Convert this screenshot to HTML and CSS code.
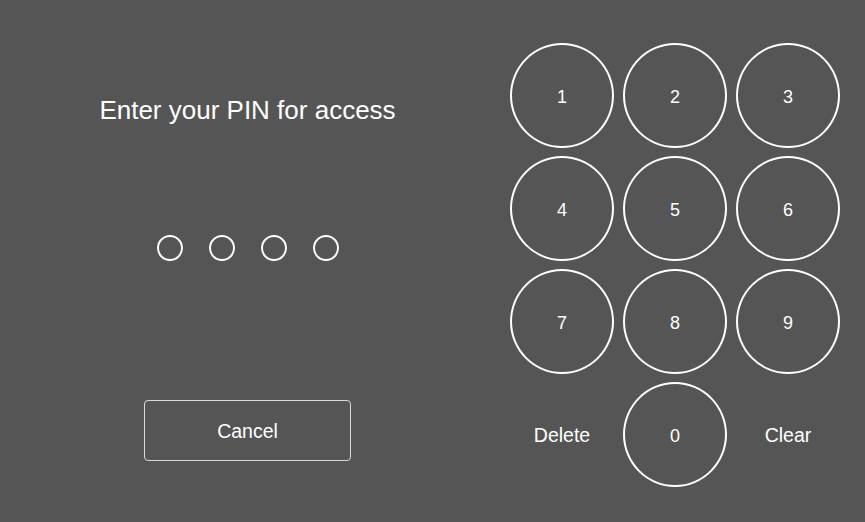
FILE: index.html
```html
<!DOCTYPE html>
<html>
<head>
<meta charset="utf-8">
<link rel="stylesheet" href="styles.css">
</head>
<body>
<div class="screen">
  <div class="left">
    <h1 class="title">Enter your PIN for access</h1>
    <div class="dots">
      <span class="dot"></span><span class="dot"></span><span class="dot"></span><span class="dot"></span>
    </div>
    <button class="cancel">Cancel</button>
  </div>
  <div class="keypad">
    <div class="key">1</div>
    <div class="key">2</div>
    <div class="key">3</div>
    <div class="key">4</div>
    <div class="key">5</div>
    <div class="key">6</div>
    <div class="key">7</div>
    <div class="key">8</div>
    <div class="key">9</div>
    <div class="action">Delete</div>
    <div class="key">0</div>
    <div class="action">Clear</div>
  </div>
</div>
</body>
</html>
```
FILE: styles.css
```css
html, body {
  margin: 0;
  padding: 0;
  background: #555555;
}
body {
  width: 865px;
  height: 522px;
  overflow: hidden;
  font-family: "Liberation Sans", Arial, sans-serif;
  color: #ffffff;
}
.screen {
  display: flex;
  height: 522px;
}
.left {
  width: 495px;
  display: flex;
  flex-direction: column;
  align-items: center;
}
.title {
  margin: 95px 0 0 0;
  font-size: 26px;
  font-weight: normal;
  line-height: 30px;
}
.dots {
  display: flex;
  gap: 26px;
  margin-top: 110px;
}
.dot {
  width: 22px;
  height: 22px;
  border: 2px solid #ffffff;
  border-radius: 50%;
}
.cancel {
  margin-top: 139px;
  width: 207px;
  height: 61px;
  background: transparent;
  border: 1px solid #d8d8d8;
  border-radius: 4px;
  color: #ffffff;
  font-family: "Liberation Sans", Arial, sans-serif;
  font-size: 19.5px;
  padding: 1px 0 0 0;
}
.keypad {
  margin-left: 15px;
  margin-top: 43px;
  display: grid;
  grid-template-columns: repeat(3, 104px);
  grid-auto-rows: 105px;
  gap: 8px 9px;
  align-content: start;
}
.key {
  box-sizing: border-box;
  border: 2px solid #ffffff;
  border-radius: 50%;
  display: flex;
  align-items: center;
  justify-content: center;
  font-size: 18px;
  padding-top: 3px;
}
.action {
  display: flex;
  align-items: center;
  justify-content: center;
  font-size: 19.5px;
  padding-top: 1px;
}
```
